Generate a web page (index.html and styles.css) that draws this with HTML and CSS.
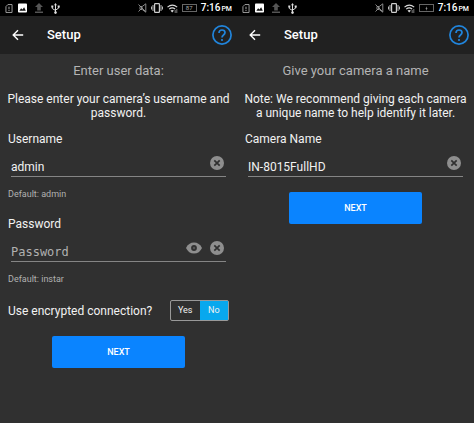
FILE: index.html
```html
<!DOCTYPE html>
<html lang="en">
<head>
<meta charset="utf-8">
<title>Setup</title>
<link rel="stylesheet" href="styles.css">
</head>
<body>
<svg class="defs" aria-hidden="true">
  <symbol id="sim" viewBox="0 0 8 10"><path d="M2.8.6h4.6v8.8H.6V2.9z" fill="none" stroke="#aaa"/><path d="M4 3v2.8M4 6.6v1.2" stroke="#bbb"/></symbol>
  <symbol id="image" viewBox="0 0 10 10"><rect width="10" height="10" rx="1" fill="#fff"/><path d="M1.5 8l2-2.8 1.5 1.6 1.8-2.6L8.7 8z" fill="#111"/></symbol>
  <symbol id="upload" viewBox="0 0 8 10"><path d="M4 0l4 4H5.8v3.6H2.2V4H0zM0 8.5h8V10H0z" fill="#555"/></symbol>
  <symbol id="usb" viewBox="0 0 9 11"><path d="M4.5 1.5v8M1.3 3.5v2l3.2 2M7.7 3.5v1.6l-3.2 2" fill="none" stroke="#ddd"/><path d="M4.5 0L6 2.2H3zM.3 2.5h2v2h-2zM6.7 2.5h2v2h-2z" fill="#ddd"/><circle cx="4.5" cy="9.6" r="1.3" fill="#ddd"/></symbol>
  <symbol id="mute" viewBox="0 0 9 10"><path d="M7.8.8v8.4L4.2 6.5H2v-3h2.2zM.5 1.5l7 7M.5 8.5l4-4" fill="none" stroke="#999" stroke-width=".9"/></symbol>
  <symbol id="vibrate" viewBox="0 0 12 10"><rect x="3.6" y=".6" width="4.8" height="8.8" rx=".6" fill="none" stroke="#ccc" stroke-width="1.2"/><path d="M2 2v6M10 2v6M.5 3.5v3M11.5 3.5v3" stroke="#bbb"/></symbol>
  <symbol id="wifi" viewBox="0 0 11 9"><path d="M.5 3.2Q5.3-1 10.2 3.2M2.2 5.2q3-2.6 6 0" fill="none" stroke="#ddd" stroke-width="1.1"/><path d="M3.5 6.6q1.7-1.4 3.4 0L5.2 8.6z" fill="#ddd"/><path d="M8.2 6v3M9.8 5v4" stroke="#999" stroke-width=".8"/></symbol>
  <symbol id="bolt" viewBox="0 0 4 6"><path d="M2.6 0L.6 3.4h1.2L1.4 6l2-3.4H2.2z" fill="#aaa"/></symbol>
  <symbol id="back" viewBox="0 0 12 12"><path d="M11.2 6H1.5M6 1.2L1.2 6 6 10.8" fill="none" stroke="#fff" stroke-width="1.4"/></symbol>
  <symbol id="help" viewBox="0 0 20 20"><circle cx="10" cy="10" r="9.1" fill="none" stroke="#2185dc" stroke-width="1.7"/><path d="M7 8q0-3 3-3t3 2.6q0 1.3-1.5 2.4T10 12.6" fill="none" stroke="#2185dc" stroke-width="1.7"/><circle cx="10" cy="15" r="1.1" fill="#2185dc"/></symbol>
  <symbol id="clear" viewBox="0 0 14 14"><circle cx="7" cy="7" r="7" fill="#8e8e8e"/><path d="M4.3 4.3l5.4 5.4M9.7 4.3L4.3 9.7" stroke="#303030" stroke-width="1.7"/></symbol>
  <symbol id="eye" viewBox="0 0 16 12"><path d="M0 6Q2.6.5 8 .5T16 6q-2.6 5.5-8 5.5T0 6z" fill="#8e8e8e"/><circle cx="8" cy="6" r="2.9" fill="#303030"/><circle cx="8" cy="6" r="1.2" fill="#555"/></symbol>
</svg>

<section class="screen">
  <div class="status">
    <svg width="8" height="9"><use href="#sim"/></svg>
    <svg class="pic" width="9" height="10"><use href="#image"/></svg>
    <svg class="up" width="8" height="10"><use href="#upload"/></svg>
    <svg class="usb" width="9" height="11"><use href="#usb"/></svg>
    <div class="status-end">
      <svg width="9" height="10"><use href="#mute"/></svg>
      <svg width="12" height="10"><use href="#vibrate"/></svg>
      <svg width="11" height="9"><use href="#wifi"/></svg>
      <span class="battery">87</span>
      <span class="time">7:16 <small>PM</small></span>
    </div>
  </div>
  <header class="bar">
    <button class="icon" aria-label="Back"><svg width="12" height="12"><use href="#back"/></svg></button>
    <h1>Setup</h1>
    <button class="icon help" aria-label="Help"><svg width="20" height="20"><use href="#help"/></svg></button>
  </header>
  <form class="content">
    <h2>Enter user data:</h2>
    <p class="note">Please enter your camera’s username and password.</p>
    <label class="label" for="user">Username</label>
    <div class="field">
      <input id="user" type="text" value="admin">
      <button type="button" class="icon" aria-label="Clear username"><svg width="14" height="14"><use href="#clear"/></svg></button>
    </div>
    <p class="hint">Default: admin</p>
    <label class="label" for="pass">Password</label>
    <div class="field">
      <input id="pass" class="mono" type="password" placeholder="Password">
      <button type="button" class="icon" aria-label="Show password"><svg width="16" height="14"><use href="#eye"/></svg></button>
      <button type="button" class="icon" aria-label="Clear password"><svg width="14" height="14"><use href="#clear"/></svg></button>
    </div>
    <p class="hint">Default: instar</p>
    <fieldset class="choice" aria-labelledby="enc">
      <span id="enc">Use encrypted connection?</span>
      <div class="toggle">
        <label><input type="radio" name="enc" value="yes"><span>Yes</span></label>
        <label><input type="radio" name="enc" value="no" checked><span>No</span></label>
      </div>
    </fieldset>
    <button type="button" class="next">NEXT</button>
  </form>
</section>

<section class="screen">
  <div class="status">
    <svg width="8" height="9"><use href="#sim"/></svg>
    <svg class="pic" width="9" height="10"><use href="#image"/></svg>
    <svg class="up" width="8" height="10"><use href="#upload"/></svg>
    <svg class="usb" width="9" height="11"><use href="#usb"/></svg>
    <div class="status-end">
      <svg width="9" height="10"><use href="#mute"/></svg>
      <svg width="12" height="10"><use href="#vibrate"/></svg>
      <svg width="11" height="9"><use href="#wifi"/></svg>
      <span class="battery"><svg width="3" height="5"><use href="#bolt"/></svg></span>
      <span class="time">7:16 <small>PM</small></span>
    </div>
  </div>
  <header class="bar">
    <button class="icon" aria-label="Back"><svg width="12" height="12"><use href="#back"/></svg></button>
    <h1>Setup</h1>
    <button class="icon help" aria-label="Help"><svg width="20" height="20"><use href="#help"/></svg></button>
  </header>
  <form class="content">
    <h2>Give your camera a name</h2>
    <p class="note">Note: We recommend giving each camera a unique name to help identify it later.</p>
    <label class="label" for="cam">Camera Name</label>
    <div class="field">
      <input id="cam" type="text" value="IN-8015FullHD">
      <button type="button" class="icon" aria-label="Clear camera name"><svg width="14" height="14"><use href="#clear"/></svg></button>
    </div>
    <button type="button" class="next">NEXT</button>
  </form>
</section>
</body>
</html>
```
FILE: styles.css
```css
* { box-sizing: border-box; }
body {
  margin: 0;
  min-height: 100vh;
  display: grid;
  grid-template-columns: 1fr 1fr;
  background: #303030;
  color: #f2f2f2;
  font: 12px/16px Roboto, sans-serif;
}
.defs { display: none; }
svg { display: block; flex: none; }
h1, h2, p, fieldset { margin: 0; padding: 0; border: 0; }
button, input { font: inherit; color: inherit; }
.icon { padding: 0; border: 0; background: none; flex: none; }

.status {
  display: flex;
  align-items: center;
  height: 16px;
  padding: 0 5px;
  background: #000;
}
.pic { margin-left: 5px; }
.up { margin-left: 8px; }
.usb { margin-left: 8px; }
.status-end { display: flex; align-items: center; gap: 4px; margin-left: auto; }
.battery {
  display: flex;
  align-items: center;
  justify-content: center;
  width: 15px;
  height: 8px;
  border: 1px solid #666;
  color: #aaa;
  font-size: 6px;
  line-height: 6px;
}
.time {
  display: flex;
  align-items: baseline;
  gap: 1px;
  font-size: 10px;
  font-weight: 500;
  color: #fff;
}
.time small { font-size: 7px; }

.bar {
  display: flex;
  align-items: center;
  height: 38px;
  padding: 0 5px 0 12px;
  background: #212121;
}
.bar h1 { margin-left: 23px; font-size: 13px; font-weight: 500; color: #fff; }
.help { margin-left: auto; }

.content { padding: 7px 8px; }
h2 {
  font-size: 13px;
  font-weight: 400;
  line-height: 20px;
  text-align: center;
  color: #b4b4b4;
}
.note { margin: 11px -3px; line-height: 14px; text-align: center; }
.label { display: block; }
.field {
  display: flex;
  align-items: flex-start;
  gap: 8px;
  height: 22px;
  margin: 8px 3px 0;
  padding: 1px 2px 0 0;
  border-bottom: 1px solid #858585;
}
.field input {
  flex: 1;
  min-width: 0;
  height: 20px;
  padding: 1px 0 0;
  border: 0;
  outline: 0;
  background: none;
}
.field .mono { font-family: "DejaVu Sans Mono", monospace; }
.field input::placeholder { color: #b0b0b0; opacity: 1; }
.hint { margin: 11px 0 16px; font-size: 9px; line-height: 12px; color: #b0b0b0; }
.choice { display: flex; align-items: center; justify-content: space-between; margin-top: 15px; }
.hint:has(+ .choice) { margin-bottom: 15px; }
.toggle {
  display: grid;
  grid-template-columns: 1fr 1fr;
  width: 59px;
  height: 21px;
  border: 1px solid #999;
  border-radius: 2px;
  font-size: 9px;
  line-height: 19px;
  text-align: center;
}
.toggle label { position: relative; }
.toggle input { position: absolute; inset: 0; margin: 0; opacity: 0; }
.toggle span { display: block; }
.toggle input:checked + span { background: #08a8ee; }
.next {
  display: block;
  width: 60%;
  height: 32px;
  margin: 15px auto 0;
  border: 0;
  border-radius: 2px;
  background: #0a84ff;
  color: #fff;
  font-size: 9px;
  font-weight: 500;
}
```
